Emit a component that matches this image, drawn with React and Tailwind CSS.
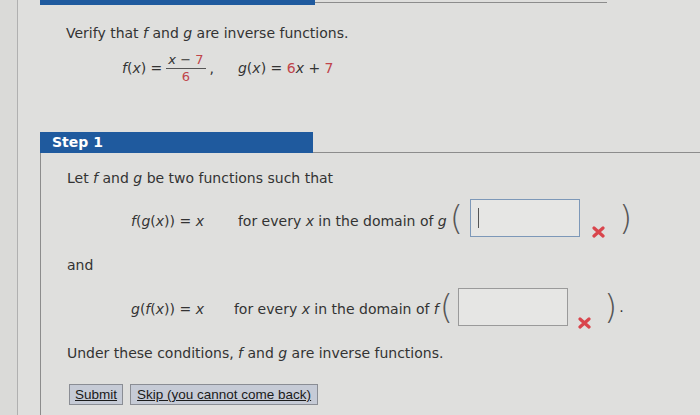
import React from 'react';

const red = 'text-[#c0444a]';

function RedX() {
  return (
    <svg width="13" height="12" viewBox="0 0 13 12" className="shrink-0">
      <path d="M2 2 L11 10 M11 2 L2 10" stroke="#d9454c" strokeWidth="3.2" strokeLinecap="round" />
    </svg>
  );
}

function AnswerBox({ focused }) {
  return (
    <div
      className={`w-[110px] h-[38px] shrink-0 bg-[#e6e6e4] border flex items-center pl-[7px] ${
        focused ? 'border-[#7d98b8]' : 'border-[#9a9a9a]'
      }`}
    >
      {focused && <div className="w-px h-[20px] bg-[#555]" />}
    </div>
  );
}

function Paren({ children }) {
  return <span className="text-[34px] leading-none font-extralight text-[#555]">{children}</span>;
}

export default function App() {
  return (
    <div
      className="w-[700px] h-[415px] overflow-hidden flex bg-[#dfdfdd] text-[#333] text-[14px]"
      style={{ fontFamily: '"DejaVu Sans", Verdana, sans-serif' }}
    >
      {/* left rail */}
      <div className="w-[18px] shrink-0 bg-[#dadad8] border-r border-[#b0b0b0]" />

      <div className="flex-1 flex flex-col pl-[22px]">
        {/* cut-off title bar */}
        <div className="flex items-start h-[6px]">
          <div className="w-[275px] h-[5px] bg-[#1f5a9e]" />
          <div className="w-[292px] h-[3px] border-b border-[#8c8c8c]" />
        </div>

        {/* prompt */}
        <div className="pl-[26px] pt-[18px]">
          <p className="leading-[18px]">
            Verify that <i>f</i> and <i>g</i> are inverse functions.
          </p>
          <div className="flex items-center pl-[56px] mt-[8px] h-[36px] whitespace-nowrap">
            <span>
              <i>f</i>(<i>x</i>) ={' '}
            </span>
            <span className="inline-flex flex-col items-center mx-[4px] text-[13px] leading-[16px]">
              <span className="px-[2px] border-b border-[#555]">
                <i>x</i> − <span className={red}>7</span>
              </span>
              <span className={red}>6</span>
            </span>
            <span className="mr-[24px]">,</span>
            <span>
              <i>g</i>(<i>x</i>) = <span className={red}>6</span>
              <i>x</i> + <span className={red}>7</span>
            </span>
          </div>
        </div>

        {/* step header */}
        <div className="flex items-end mt-[46px]">
          <div className="w-[273px] h-[21px] bg-[#1f5a9e] text-white font-bold text-[14px] flex items-center pl-[12px]">
            Step 1
          </div>
          <div className="flex-1 border-b border-[#8c8c8c]" />
        </div>

        {/* step body */}
        <div className="flex-1 border-l border-[#8c8c8c] pl-[26px]">
          <p className="mt-[16px] leading-[18px]">
            Let <i>f</i> and <i>g</i> be two functions such that
          </p>

          <div className="flex items-center mt-[11px] h-[40px] whitespace-nowrap">
            <span className="pl-[64px] shrink-0 translate-y-[3px]">
              <i>f</i>(<i>g</i>(<i>x</i>)) = <i>x</i>
            </span>
            <span className="ml-[34px] translate-y-[3px]">
              for every <i>x</i> in the domain of <i>g</i>
            </span>
            <span className="ml-[3px] mr-[7px]">
              <Paren>(</Paren>
            </span>
            <AnswerBox focused />
            <span className="self-end ml-[12px]">
              <RedX />
            </span>
            <span className="ml-[14px]">
              <Paren>)</Paren>
            </span>
          </div>

          <p className="mt-[18px] leading-[18px]">and</p>

          <div className="flex items-center mt-[13px] h-[40px] whitespace-nowrap">
            <span className="pl-[64px] shrink-0 translate-y-[2px]">
              <i>g</i>(<i>f</i>(<i>x</i>)) = <i>x</i>
            </span>
            <span className="ml-[30px] translate-y-[2px]">
              for every <i>x</i> in the domain of <i>f</i>
            </span>
            <span className="ml-[1px] mr-[5px]">
              <Paren>(</Paren>
            </span>
            <AnswerBox />
            <span className="self-end ml-[10px] translate-y-[2px]">
              <RedX />
            </span>
            <span className="ml-[13px]">
              <Paren>)</Paren>
            </span>
            <span className="ml-[2px]">.</span>
          </div>

          <p className="mt-[17px] leading-[18px]">
            Under these conditions, <i>f</i> and <i>g</i> are inverse functions.
          </p>

          <div
            className="flex gap-[7px] mt-[22px] ml-[2px] text-[13.5px] text-[#1a1a1a]"
            style={{ fontFamily: '"Liberation Sans", Arial, sans-serif' }}
          >
            <button className="h-[21px] px-[5px] bg-[#c6cbd6] border border-[#8a8d94] underline leading-none">
              Submit
            </button>
            <button className="h-[21px] px-[6px] bg-[#c6cbd6] border border-[#8a8d94] underline leading-none">
              Skip (you cannot come back)
            </button>
          </div>
        </div>
      </div>
    </div>
  );
}
